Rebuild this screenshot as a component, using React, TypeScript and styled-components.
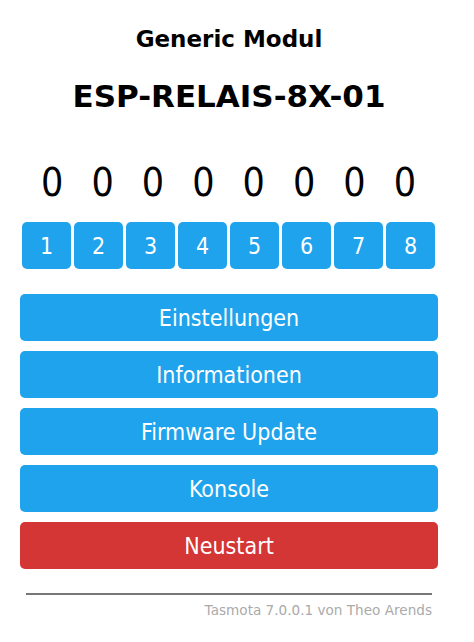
import styled, { createGlobalStyle } from 'styled-components';

const GlobalStyle = createGlobalStyle`
  html, body {
    margin: 0;
    padding: 0;
    background: #ffffff;
  }
  body {
    font-family: "DejaVu Sans Condensed", "DejaVu Sans", Verdana, sans-serif;
    font-stretch: condensed;
    color: #000000;
  }
`;

const relays = [1, 2, 3, 4, 5, 6, 7, 8];

const menu = [
  { label: 'Einstellungen' },
  { label: 'Informationen' },
  { label: 'Firmware Update' },
  { label: 'Konsole' },
  { label: 'Neustart', danger: true },
];

export default function App() {
  return (
    <>
      <GlobalStyle />
      <Wrapper>
        <ModuleName>Generic Modul</ModuleName>
        <DeviceName>ESP-RELAIS-8X-01</DeviceName>

        <StateRow>
          {relays.map((r) => (
            <State key={r}>0</State>
          ))}
        </StateRow>

        <RelayRow>
          {relays.map((r) => (
            <RelayButton key={r}>{r}</RelayButton>
          ))}
        </RelayRow>

        <Menu>
          {menu.map((m) => (
            <MenuButton key={m.label} $danger={m.danger}>
              {m.label}
            </MenuButton>
          ))}
        </Menu>

        <Footer>
          <Rule />
          <Credit>Tasmota 7.0.0.1 von Theo Arends</Credit>
        </Footer>
      </Wrapper>
    </>
  );
}

const Wrapper = styled.div`
  width: 418px;
  margin-left: 20px;
  text-align: center;
`;

const ModuleName = styled.h3`
  margin: 0;
  padding-top: 25px;
  font-family: "DejaVu Sans", Verdana, sans-serif;
  font-stretch: normal;
  font-size: 23px;
  line-height: 28px;
  font-weight: bold;
`;

const DeviceName = styled.h2`
  margin: 25px 0 0;
  font-family: "DejaVu Sans", Verdana, sans-serif;
  font-stretch: normal;
  font-size: 31px;
  line-height: 36px;
  font-weight: bold;
`;

const StateRow = styled.div`
  display: grid;
  grid-template-columns: repeat(8, 1fr);
  padding: 0 8px 0 7px;
  margin-top: 47px;
  font-size: 39px;
  line-height: 44px;
`;

const State = styled.div`
  text-align: center;
`;

const RelayRow = styled.div`
  display: grid;
  grid-template-columns: repeat(8, 1fr);
  gap: 3px;
  padding: 0 3px 0 2px;
  margin-top: 17px;
`;

const RelayButton = styled.button`
  height: 47px;
  border: 0;
  border-radius: 5px;
  background: #1fa3ec;
  color: #ffffff;
  font-family: inherit;
  font-stretch: condensed;
  font-size: 23px;
  padding: 0;
`;

const Menu = styled.div`
  display: flex;
  flex-direction: column;
  gap: 10px;
  margin-top: 25px;
`;

const MenuButton = styled.button<{ $danger?: boolean }>`
  height: 47px;
  width: 100%;
  border: 0;
  border-radius: 5px;
  background: ${(p) => (p.$danger ? '#d43535' : '#1fa3ec')};
  color: #ffffff;
  font-family: inherit;
  font-stretch: condensed;
  font-size: 23px;
  padding: 0;
`;

const Footer = styled.div`
  text-align: right;
  margin-top: 24px;
  padding: 0 6px;
`;

const Rule = styled.hr`
  margin: 0;
  border: 0;
  border-top: 2px solid #777777;
`;

const Credit = styled.div`
  margin-top: 7px;
  font-family: "DejaVu Sans", Verdana, sans-serif;
  font-stretch: normal;
  font-size: 13.6px;
  color: #aaaaaa;
`;
